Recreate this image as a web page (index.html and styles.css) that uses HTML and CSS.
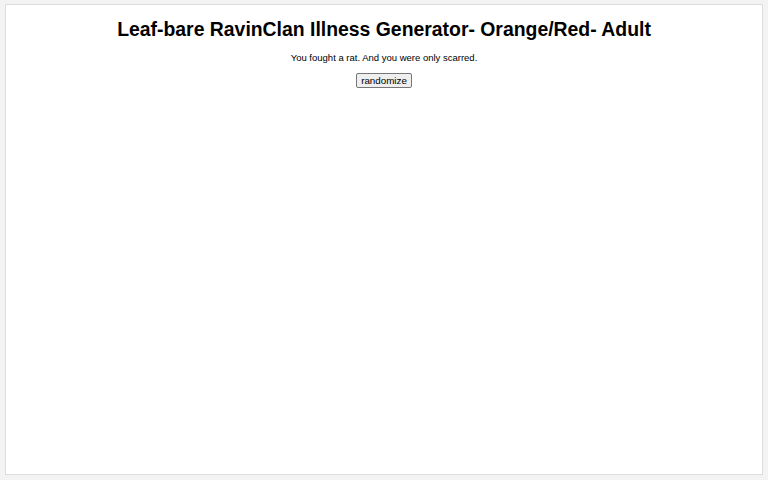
FILE: index.html
```html
<!DOCTYPE html>
<html>
<head>
<meta charset="utf-8">
<link rel="stylesheet" href="styles.css">
</head>
<body>
<div class="page">
  <h1 class="title">Leaf-bare RavinClan Illness Generator- Orange/Red- Adult</h1>
  <p class="result">You fought a rat. And you were only scarred.</p>
  <div class="actions"><button class="btn" type="button">randomize</button></div>
</div>
</body>
</html>
```
FILE: styles.css
```css
html, body {
  margin: 0;
  padding: 0;
  height: 100%;
}
body {
  background: #f3f3f3;
  font-family: "Liberation Sans", Arial, sans-serif;
  padding: 4px 5px 5px 5px;
  box-sizing: border-box;
}
.page {
  background: #ffffff;
  border: 1px solid #dcdcdc;
  height: 100%;
  box-sizing: border-box;
  text-align: center;
  padding-top: 13px;
}
.title {
  font-size: 19.4px;
  font-weight: bold;
  margin: 0;
  line-height: 22px;
  color: #000;
}
.result {
  font-size: 9.5px;
  margin: 12px 0 0 0;
  line-height: 12px;
  color: #000;
}
.actions {
  margin-top: 6px;
}
.btn {
  font-family: "Liberation Sans", Arial, sans-serif;
  font-size: 9.8px;
  padding: 1px 4px;
  border: 1px solid #767676;
  border-radius: 2px;
  background: #efefef;
  color: #000;
}
```
